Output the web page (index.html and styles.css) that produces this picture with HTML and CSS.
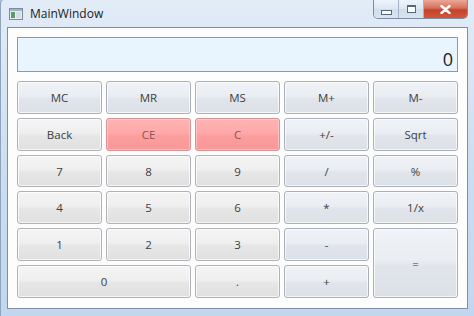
FILE: index.html
```html
<!DOCTYPE html>
<html>
<head>
<meta charset="utf-8">
<link rel="stylesheet" href="styles.css">
</head>
<body>
<div class="window">
  <div class="titlebar">
    <svg class="app-icon" width="14" height="12" viewBox="0 0 14 12">
      <rect x="0.5" y="0.5" width="13" height="11" fill="#e9edf2" stroke="#7d8a99"/>
      <rect x="1" y="1" width="12" height="2" fill="#9fb3c9"/>
      <rect x="2" y="4" width="4" height="6" fill="#5f9a6b"/>
      <rect x="7" y="4" width="5" height="6" fill="#d6dde6"/>
    </svg>
    <span class="title">MainWindow</span>
    <div class="caption">
      <div class="cap cap-min"><span class="min-bar"></span></div>
      <div class="cap cap-max"><span class="max-box"></span></div>
      <div class="cap cap-close">
        <svg width="11" height="9" viewBox="0 0 11 9"><path d="M1.5 1 L9.5 8 M9.5 1 L1.5 8" stroke="#fff" stroke-width="2.4" stroke-linecap="round"/></svg>
      </div>
    </div>
  </div>
  <div class="client">
    <div class="display">0</div>
    <div class="keys">
      <div class="key mem">MC</div>
      <div class="key mem">MR</div>
      <div class="key mem">MS</div>
      <div class="key op">M+</div>
      <div class="key op">M-</div>
      <div class="key">Back</div>
      <div class="key red">CE</div>
      <div class="key red">C</div>
      <div class="key op">+/-</div>
      <div class="key op">Sqrt</div>
      <div class="key">7</div>
      <div class="key">8</div>
      <div class="key">9</div>
      <div class="key op">/</div>
      <div class="key op">%</div>
      <div class="key">4</div>
      <div class="key">5</div>
      <div class="key">6</div>
      <div class="key op">*</div>
      <div class="key op">1/x</div>
      <div class="key">1</div>
      <div class="key">2</div>
      <div class="key">3</div>
      <div class="key op">-</div>
      <div class="key op equals">=</div>
      <div class="key zero">0</div>
      <div class="key">.</div>
      <div class="key op">+</div>
    </div>
  </div>
</div>
</body>
</html>
```
FILE: styles.css
```css
html, body {
  margin: 0;
  padding: 0;
  width: 474px;
  height: 316px;
  overflow: hidden;
  background: #a9c3de;
}
.window {
  box-sizing: border-box;
  width: 474px;
  height: 316px;
  padding: 0 6px 7px 6px;
  display: flex;
  flex-direction: column;
  background: linear-gradient(180deg, #e2ecf7 0%, #d6e4f3 30%, #cadcf0 60%, #c2d7ee 100%);
  border-left: 1px solid #8ea3bc;
  border-top-left-radius: 4px;
  font-family: "Open Sans", "Noto Sans", sans-serif;
}
.titlebar {
  height: 27px;
  display: flex;
  align-items: flex-start;
}
.app-icon {
  margin: 8px 0 0 2px;
}
.title {
  margin: 5px 0 0 7px;
  font-size: 12px;
  color: #1b1b1b;
}
.caption {
  margin-left: auto;
  display: flex;
  height: 18px;
  border: 1px solid #7d8ea3;
  border-top: none;
  border-radius: 0 0 5px 5px;
  overflow: hidden;
}
.cap {
  height: 18px;
  display: flex;
  align-items: center;
  justify-content: center;
}
.cap-min, .cap-max {
  width: 24px;
  background: linear-gradient(180deg, #edf3fa 0%, #dce7f3 50%, #cfdeee 51%, #d8e4f1 100%);
  border-right: 1px solid #a3b4c8;
}
.min-bar {
  width: 9px;
  height: 3px;
  background: #fff;
  border: 1px solid #55677d;
  margin-top: 6px;
}
.max-box {
  width: 7px;
  height: 5px;
  border: 1px solid #55677d;
  border-top-width: 2px;
  background: #fff;
}
.cap-close {
  width: 43px;
  background: linear-gradient(180deg, #eaa898 0%, #d7705a 45%, #c3432b 55%, #d0573a 100%);
}
.client {
  flex: 1;
  background: #fdfdfe;
  border: 1px solid #7f8fa3;
  box-shadow: inset 0 0 0 1px #ffffff;
  padding: 9px 9px 10px 9px;
  display: flex;
  flex-direction: column;
  gap: 9px;
}
.display {
  height: 33px;
  background: #e9f5fe;
  border: 1px solid #8b99a8;
  font-size: 18px;
  color: #1d1d1d;
  padding: 0 4px;
  line-height: 24px;
  display: flex;
  align-items: flex-end;
  justify-content: flex-end;
}
.keys {
  flex: 1;
  display: grid;
  grid-template-columns: repeat(5, 1fr);
  grid-template-rows: repeat(6, 1fr);
  gap: 4px;
}
.key {
  display: flex;
  align-items: center;
  justify-content: center;
  border: 1px solid #afb3b8;
  border-radius: 3px;
  background: linear-gradient(180deg, #f4f4f4 0%, #efefef 45%, #e6e6e6 55%, #e0e0e0 100%);
  box-shadow: inset 0 0 0 1px rgba(255,255,255,0.7);
  font-size: 11.5px;
  color: #3e3e3e;
}
.key.op, .key.mem {
  background: linear-gradient(180deg, #eff2f6 0%, #eaedf2 45%, #e1e5eb 55%, #dce0e7 100%);
  border-color: #a9b0b9;
}
.key.red {
  background: linear-gradient(180deg, #ffb3b3 0%, #ffa9a9 45%, #fc9e9e 55%, #f89898 100%);
  border-color: #d59393;
  box-shadow: inset 0 0 0 1px rgba(255,220,220,0.5);
  color: #8f5050;
}
.key.equals {
  grid-column: 5;
  grid-row: 5 / span 2;
}
.key.zero {
  grid-column: 1 / span 2;
}
```
